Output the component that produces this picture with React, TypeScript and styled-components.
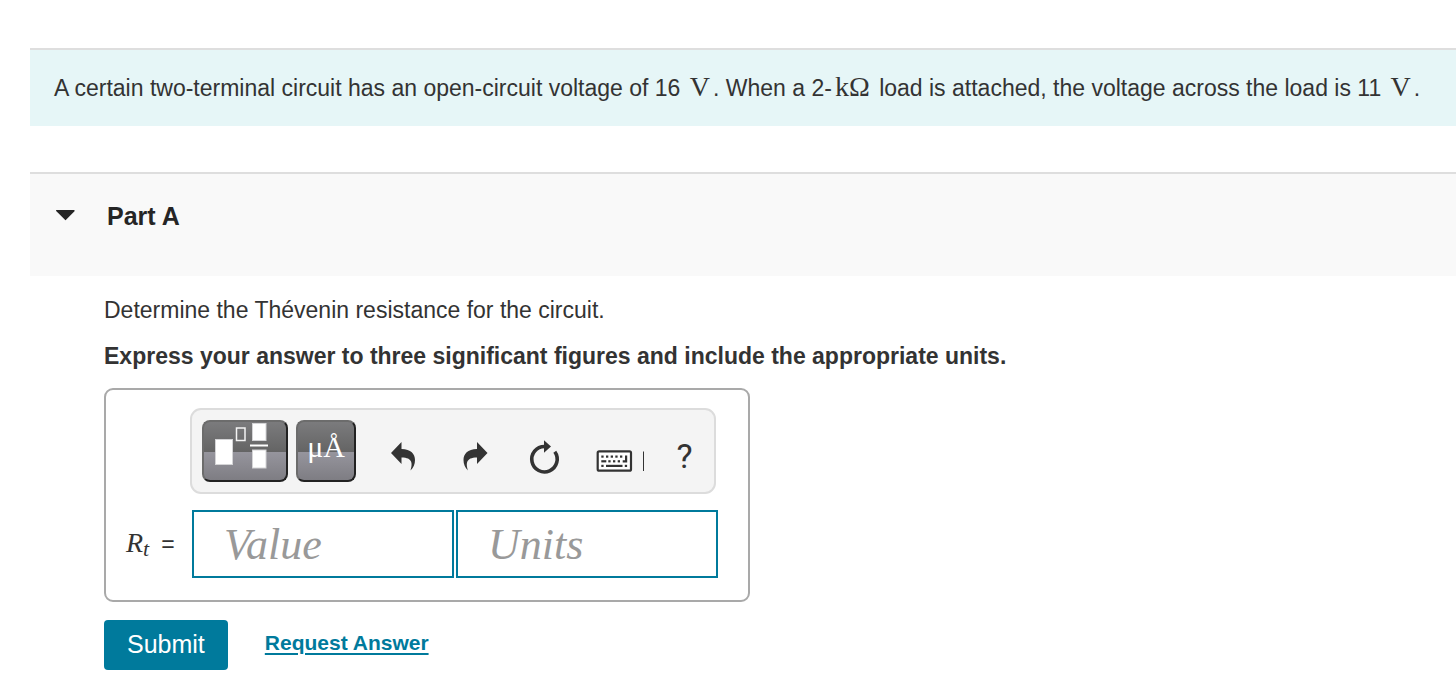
import React from "react";
import styled, { createGlobalStyle } from "styled-components";

const GlobalStyle = createGlobalStyle`
  *, *::before, *::after { box-sizing: border-box; }
  body {
    margin: 0;
    background: #fff;
    color: #333;
    font-family: "Liberation Sans", Arial, Helvetica, sans-serif;
    font-size: 23px;
    line-height: 28px;
  }
  button, input { font: inherit; }
`;

const MATH_FONT = `"Liberation Serif", "Times New Roman", serif`;

const Page = styled.main`
  padding: 48px 0 18px 30px;
`;

const Problem = styled.section`
  margin-bottom: 46px;
  padding: 24px 20px 24px 24px;
  border-top: 2px solid #dedede;
  background: #e6f6f7;
`;

const Text = styled.p<{ $strong?: boolean }>`
  margin: 0 0 18px;
  font-weight: ${(p) => (p.$strong ? 700 : 400)};

  ${Problem} & { margin: 0; }
`;

const MathText = styled.span<{ $italic?: boolean }>`
  font-family: ${MATH_FONT};
  font-size: 28px;
  line-height: 0;
  font-style: ${(p) => (p.$italic ? "italic" : "normal")};
`;

const Unit = styled(MathText)`
  margin: 0 3px;
`;

const Subscript = styled.span`
  position: relative;
  top: 4px;
  font-size: 22px;
`;

const PartHeader = styled.header`
  display: flex;
  min-height: 104px;
  padding: 28px 24px;
  border-top: 2px solid #dedede;
  background: #f9f9f9;
  color: #252525;
`;

const Toggle = styled.button`
  display: flex;
  align-items: center;
  gap: 32px;
  height: 28px;
  padding: 0 2px;
  border: 0;
  background: none;
  color: inherit;
  font-size: 25px;
  font-weight: 700;
  cursor: pointer;
`;

const PartBody = styled.form`
  padding: 20px 24px 0 74px;
`;

const AnswerBox = styled.div`
  width: fit-content;
  max-width: 100%;
  margin-bottom: 18px;
  padding: 18px 30px 22px 18px;
  border: 2px solid #a9a9a9;
  border-radius: 9px;
`;

const Toolbar = styled.div`
  display: flex;
  margin: 0 2px 16px 66px;
  padding: 10px;
  border: 2px solid #dcdcdc;
  border-radius: 11px;
  background: #f4f4f4;
`;

const PaletteButton = styled.button<{ $width: number }>`
  display: flex;
  justify-content: center;
  width: ${(p) => p.$width}px;
  height: 62px;
  margin-right: 8px;
  padding: 0;
  border: 2px solid;
  border-color: #6c6c6c #222 #222 #6c6c6c;
  border-radius: 8px;
  background: linear-gradient(#7b7b7d 0%, #646464 52%, #96959d 52%, #7e7d83 100%);
  color: #fff;
  font-family: ${MATH_FONT};
  font-size: 30px;
  line-height: 50px;
  cursor: pointer;
`;

const ToolButton = styled.button`
  flex: none;
  width: 70px;
  height: 62px;
  padding: 0;
  border: 0;
  background: none;
  color: #333;
  cursor: pointer;

  svg { display: block; }
`;

const IconTools = styled.div`
  display: flex;
  margin-left: 5px;
`;

const HelpButton = styled(ToolButton)`
  width: 55px;
  padding: 10px 0 0 16px;
  font-family: Roboto, sans-serif;
  font-size: 34px;
`;

const Fields = styled.div`
  display: flex;
  align-items: center;
  gap: 2px;
`;

const FieldLabel = styled.label`
  display: flex;
  align-items: baseline;
  gap: 12px;
  width: 66px;
  padding-left: 2px;
`;

const Field = styled.input`
  width: 262px;
  min-width: 0;
  height: 68px;
  padding: 0 30px;
  border: 2px solid #007a9c;
  border-radius: 0;
  background: #fff;
  color: #333;
  font-family: ${MATH_FONT};
  font-size: 44px;

  &::placeholder {
    color: #999;
    font-style: italic;
    opacity: 1;
  }
`;

const Actions = styled.div`
  display: flex;
  align-items: center;
  gap: 37px;
`;

const SubmitButton = styled.button`
  height: 50px;
  padding: 0 23px 2px;
  border: 0;
  border-radius: 4px;
  background: #007a9c;
  color: #fff;
  font-size: 25px;
  cursor: pointer;
`;

const RequestLink = styled.a`
  padding-bottom: 4px;
  color: #007a9c;
  font-size: 21px;
  font-weight: 700;
  text-underline-offset: 3px;
  text-decoration-thickness: 2px;
`;

const CaretIcon = () => (
  <svg width="19" height="28" viewBox="0 0 19 28" aria-hidden="true">
    <path d="M0.5 8H18a.8.8 0 0 1 .5 1.3L10.3 17.6a1 1 0 0 1-1.6 0L.4 9.3A.8.8 0 0 1 .5 8Z" fill="currentColor" />
  </svg>
);

const TemplatesIcon = () => (
  <svg width="82" height="58" viewBox="2 2 82 58" aria-hidden="true">
    <g fill="#fff" stroke="#d4d4d6" strokeWidth="1">
      <rect x="13.5" y="19.5" width="17" height="25" />
      <rect x="50.5" y="3.5" width="13.5" height="17" />
      <rect x="50.5" y="30" width="13.5" height="18" />
    </g>
    <rect x="34.5" y="8" width="8.5" height="12.5" fill="none" stroke="#f4f4f4" strokeWidth="1.5" />
    <rect x="48" y="24.5" width="18" height="2" fill="#fff" />
  </svg>
);

const ARROW = "M22 33 32.5 22V29C42 29 46 34 46 40C46 44 44.5 48 41.5 50.5C43.5 44 44 37.5 32.5 37.5V44Z";

const UndoIcon = () => (
  <svg width="70" height="62" viewBox="0 0 70 62" aria-hidden="true">
    <path d={ARROW} fill="currentColor" />
  </svg>
);

const RedoIcon = () => (
  <svg width="70" height="62" viewBox="0 0 70 62" aria-hidden="true">
    <path d={ARROW} fill="currentColor" transform="translate(70.5 0) scale(-1 1)" />
  </svg>
);

const ResetIcon = () => (
  <svg width="70" height="62" viewBox="0 0 70 62" aria-hidden="true">
    <path d="M35.5 26.5A12.7 12.7 0 1 0 45.8 31.8" fill="none" stroke="currentColor" strokeWidth="3.6" />
    <path d="M35 20.3 42 26.5 35 32.7Z" fill="currentColor" />
  </svg>
);

const KeyboardIcon = () => (
  <svg width="70" height="62" viewBox="-1 0 70 62" aria-hidden="true">
    <rect x="17.7" y="31.3" width="33.3" height="19.4" rx="1.5" fill="#fff" stroke="currentColor" strokeWidth="2.2" />
    <g fill="currentColor">
      {[21.3, 26, 30.7, 35.3, 40].map((x) => (
        <rect key={x} x={x} y="35.5" width="2.3" height="2.2" />
      ))}
      <path d="M45 35.5H47.2V42.4H42.7V40.2H45Z" />
      <rect x="21.3" y="40.2" width="5" height="2.2" />
      {[28.3, 33, 37.7].map((x) => (
        <rect key={x} x={x} y="40.2" width="2.3" height="2.2" />
      ))}
      <rect x="21.3" y="44.8" width="2.3" height="2.2" />
      <rect x="26" y="44.8" width="16.5" height="2.2" />
      <rect x="44.8" y="44.8" width="2.3" height="2.2" />
      <rect x="63" y="31.5" width="1" height="19.5" />
    </g>
  </svg>
);

export default function App() {
  return (
    <>
      <GlobalStyle />
      <Page>
        <Problem>
          <Text>
            A certain two-terminal circuit has an open-circuit voltage of 16 <Unit>V</Unit>. When a 2-
            <Unit>kΩ</Unit> load is attached, the voltage across the load is 11 <Unit>V</Unit>.
          </Text>
        </Problem>

        <PartHeader>
          <Toggle type="button" aria-expanded="true" aria-controls="part-a">
            <CaretIcon />
            Part A
          </Toggle>
        </PartHeader>

        <PartBody id="part-a" onSubmit={(e: React.FormEvent) => e.preventDefault()}>
          <Text>Determine the Thévenin resistance for the circuit.</Text>
          <Text $strong>Express your answer to three significant figures and include the appropriate units.</Text>

          <AnswerBox>
            <Toolbar role="toolbar" aria-label="Equation tools">
              <PaletteButton type="button" $width={86} aria-label="Templates">
                <TemplatesIcon />
              </PaletteButton>
              <PaletteButton type="button" $width={60} aria-label="Symbols">
                μÅ
              </PaletteButton>
              <IconTools>
                <ToolButton type="button" aria-label="Undo">
                  <UndoIcon />
                </ToolButton>
                <ToolButton type="button" aria-label="Redo">
                  <RedoIcon />
                </ToolButton>
                <ToolButton type="button" aria-label="Reset">
                  <ResetIcon />
                </ToolButton>
                <ToolButton type="button" aria-label="Keyboard shortcuts">
                  <KeyboardIcon />
                </ToolButton>
                <HelpButton type="button" aria-label="Help">
                  ?
                </HelpButton>
              </IconTools>
            </Toolbar>

            <Fields>
              <FieldLabel htmlFor="value">
                <MathText $italic>
                  R<Subscript>t</Subscript>
                </MathText>
                =
              </FieldLabel>
              <Field id="value" placeholder="Value" autoComplete="off" />
              <Field id="units" placeholder="Units" aria-label="Units" autoComplete="off" />
            </Fields>
          </AnswerBox>

          <Actions>
            <SubmitButton type="submit">Submit</SubmitButton>
            <RequestLink href="#request-answer">Request Answer</RequestLink>
          </Actions>
        </PartBody>
      </Page>
    </>
  );
}
